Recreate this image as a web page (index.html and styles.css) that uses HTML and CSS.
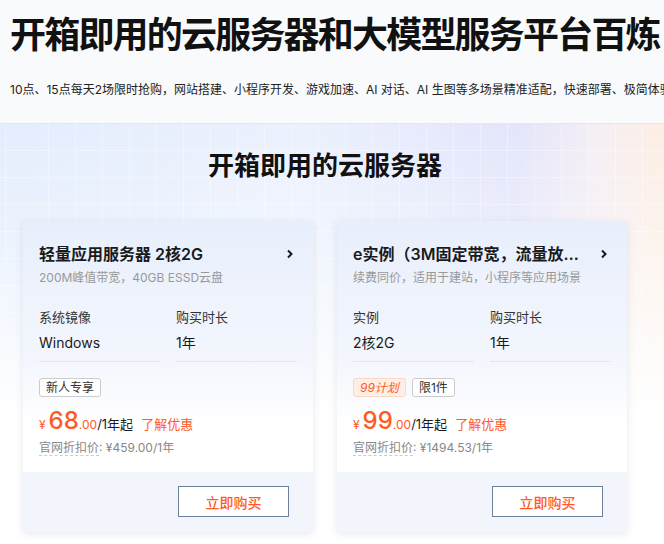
FILE: index.html
```html
<!DOCTYPE html>
<html lang="zh-CN">
<head>
<meta charset="UTF-8">
<meta name="viewport" content="width=device-width, initial-scale=1.0">
<title>云服务器</title>
<link rel="stylesheet" href="styles.css">
</head>
<body>
<div class="hero">
<h1 class="hero-title">开箱即用的云服务器和大模型服务平台百炼</h1>
<p class="hero-desc">10点、15点每天2场限时抢购，网站搭建、小程序开发、游戏加速、AI 对话、AI 生图等多场景精准适配，快速部署、极简体验</p>
</div>

<div class="section">
<h2 class="section-title">开箱即用的云服务器</h2>
<div class="cards">

<div class="card">
<div class="card-body">
<div class="card-head">
<span class="card-name">轻量应用服务器 2核2G</span>
<svg class="chevron" width="8" height="10" viewBox="0 0 8 10"><path d="M2 1.5 L5.5 5 L2 8.5" fill="none" stroke="#1a1a1a" stroke-width="2"/></svg>
</div>
<p class="card-sub">200M峰值带宽，40GB ESSD云盘</p>
<div class="opts">
<div class="opt">
<div class="opt-label">系统镜像</div>
<div class="opt-value">Windows</div>
</div>
<div class="opt">
<div class="opt-label">购买时长</div>
<div class="opt-value">1年</div>
</div>
</div>
<div class="tags">
<span class="tag">新人专享</span>
</div>
<div class="price">
<span class="yen">¥</span><span class="num">68</span><span class="dec">.00</span><span class="unit">/1年起</span><span class="more">了解优惠</span>
</div>
<div class="orig"><span class="dashed">官网折扣价</span>: ¥459.00/1年</div>
</div>
<div class="card-foot">
<button class="buy">立即购买</button>
</div>
</div>

<div class="card">
<div class="card-body">
<div class="card-head">
<span class="card-name">e实例（3M固定带宽，流量放心用）</span>
<svg class="chevron" width="8" height="10" viewBox="0 0 8 10"><path d="M2 1.5 L5.5 5 L2 8.5" fill="none" stroke="#1a1a1a" stroke-width="2"/></svg>
</div>
<p class="card-sub">续费同价，适用于建站，小程序等应用场景</p>
<div class="opts">
<div class="opt">
<div class="opt-label">实例</div>
<div class="opt-value">2核2G</div>
</div>
<div class="opt">
<div class="opt-label">购买时长</div>
<div class="opt-value">1年</div>
</div>
</div>
<div class="tags">
<span class="tag tag-hot">99计划</span>
<span class="tag">限1件</span>
</div>
<div class="price">
<span class="yen">¥</span><span class="num">99</span><span class="dec">.00</span><span class="unit">/1年起</span><span class="more">了解优惠</span>
</div>
<div class="orig"><span class="dashed">官网折扣价</span>: ¥1494.53/1年</div>
</div>
<div class="card-foot">
<button class="buy">立即购买</button>
</div>
</div>

</div>
</div>
</body>
</html>
```

FILE: styles.css
```css
body {
margin: 0;
font-family: Inter, "Noto Sans CJK SC", sans-serif;
color: #1f1f1f;
background: #fff;
overflow: hidden;
}

.hero {
background: #f8fafc;
border-bottom: 1px solid #e6e8eb;
padding: 13px 0 23px 10px;
white-space: nowrap;
}

.hero-title {
margin: 0;
font-size: 36px;
line-height: 44px;
font-weight: 700;
letter-spacing: -1.8px;
color: #111;
}

.hero-desc {
margin: 23px 0 0;
font-size: 12px;
line-height: 20px;
color: #222;
}

.section {
padding: 24px 0 12px 23px;
background:
linear-gradient(to bottom, rgba(255,255,255,0) 0, rgba(255,255,255,0.3) 25%, #fff 70%),
repeating-linear-gradient(to right, transparent 0, transparent 26px, rgba(255,255,255,0.35) 26px, rgba(255,255,255,0.35) 27px),
repeating-linear-gradient(to bottom, transparent 0, transparent 26px, rgba(255,255,255,0.35) 26px, rgba(255,255,255,0.35) 27px),
linear-gradient(to right, #e3edfd 0, #ebf1fd 45%, #e3e5fb 78%, #f5eef4 90%, #fdeee3 100%);
background-position: 0 0, 22px 0, 0 0, 0 0;
}

.section-title {
margin: 0 14px 37px -23px;
text-align: center;
font-size: 26px;
line-height: 36px;
font-weight: 700;
color: #111;
}

.cards {
display: flex;
gap: 24px;
}

.card {
width: 290px;
background: linear-gradient(to bottom, #e8effc 0, #f3f6fd 45%, #fff 65%);
box-shadow: 0 2px 8px rgba(30, 50, 90, 0.1);
}

.card-body {
padding: 21px 16px 15px;
}

.card-head {
display: flex;
align-items: center;
justify-content: space-between;
}

.card-name {
font-size: 16px;
line-height: 24px;
font-weight: 600;
color: #1a1a1a;
white-space: nowrap;
overflow: hidden;
text-overflow: ellipsis;
max-width: 232px;
}

.chevron {
margin-right: 3px;
}

.card-sub {
margin: 3px 0 0;
font-size: 12px;
line-height: 18px;
color: #999;
}

.opts {
display: flex;
gap: 16px;
margin-top: 20px;
}

.opt {
flex: 1;
border-bottom: 1px solid #e3e6eb;
padding-bottom: 7px;
}

.opt-label {
font-size: 13px;
line-height: 20px;
color: #333;
}

.opt-value {
margin-top: 5px;
font-size: 14px;
line-height: 22px;
color: #1a1a1a;
}

.tags {
display: flex;
gap: 6px;
margin-top: 16px;
}

.tag {
height: 17px;
line-height: 17px;
padding: 0 6px;
border: 1px solid #ccc;
border-radius: 3px;
font-size: 12px;
color: #333;
background: #fff;
}

.tag-hot {
background: #ffeee4;
border-color: #fbd8c5;
color: #ff5a1f;
font-style: italic;
}

.price {
margin-top: 10px;
height: 28px;
display: flex;
align-items: baseline;
color: #ff5a1f;
}

.yen {
font-size: 12px;
margin-right: 3px;
}

.num {
font-size: 24px;
line-height: 28px;
font-weight: 500;
}

.dec {
font-size: 12px;
}

.unit {
font-size: 13px;
color: #1a1a1a;
}

.more {
font-size: 13px;
margin-left: 8px;
}

.orig {
margin-top: 4px;
font-size: 12px;
line-height: 18px;
color: #888;
}

.dashed {
border-bottom: 1px dashed #ccc;
}

.card-foot {
background: #f2f6fc;
padding: 14px 24px 15px;
display: flex;
justify-content: flex-end;
}

.buy {
width: 111px;
height: 31px;
border: 1px solid #6d819c;
background: #fff;
color: #ff5a1f;
font-family: inherit;
font-size: 14px;
font-weight: 500;
cursor: pointer;
}
```
